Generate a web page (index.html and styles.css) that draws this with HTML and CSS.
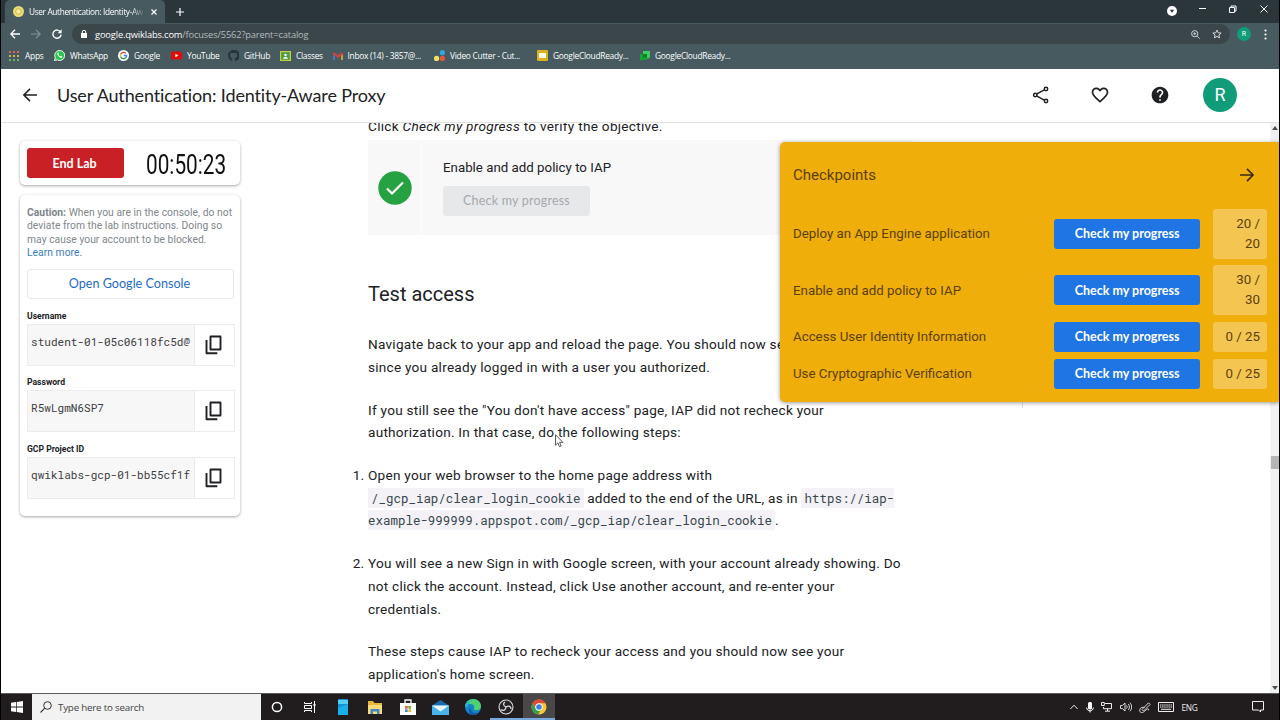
FILE: index.html
```
<!DOCTYPE html>
<html lang="en">
<head>
    <meta charset="UTF-8">
    <title>User Authentication: Identity-Aware Proxy</title>
    <link rel="stylesheet" href="styles.css">
</head>
<body>
    <div class="screen">
        <div class="tab-strip">
            <div class="tab">
                <svg class="favicon" width="11" height="11" viewBox="0 0 11 11"><circle cx="5.5" cy="5.5" r="5.5" fill="#e9dc7a"/><circle cx="5.5" cy="5.5" r="2.8" fill="#f6eda2" stroke="#c9b940"/></svg>
                <span class="tab-title">User Authentication: Identity-Aw</span>
                <svg class="tab-close" width="6" height="6" viewBox="0 0 6 6"><path d="M.5.5l5 5M5.5.5l-5 5" stroke="#fff" stroke-width="1.2"/></svg>
            </div>
            <svg class="new-tab" width="8" height="8" viewBox="0 0 8 8"><path d="M4 0v8M0 4h8" stroke="#fff" stroke-width="1.2"/></svg>
            <div class="window-buttons">
                <svg width="10" height="10" viewBox="0 0 10 10"><circle cx="5" cy="5" r="5" fill="#fff"/><path d="M2.8 3.8h4.4L5 6.7z" fill="#2b363a"/></svg>
                <svg width="7" height="10" viewBox="0 0 7 10"><path d="M0 3.5h7" stroke="#fff"/></svg>
                <svg width="8" height="10" viewBox="0 0 8 10"><path d="M.5 2.5h5v5h-5zM2 2.500V1h5v5H5.500" fill="none" stroke="#fff"/></svg>
                <svg width="8" height="10" viewBox="0 0 8 10"><path d="M.5.5l7 7M7.500.5l-7 7" stroke="#fff"/></svg>
            </div>
        </div>

        <div class="toolbar">
            <div class="nav-buttons">
                <svg width="10" height="10" viewBox="0 0 10 10"><path d="M10 5H1M5 .8L.8 5 5 9.200" fill="none" stroke="#fff" stroke-width="1.300"/></svg>
                <svg width="10" height="10" viewBox="0 0 10 10"><path d="M0 5h9M5 .8L9.200 5 5 9.200" fill="none" stroke="#84949a" stroke-width="1.200"/></svg>
                <svg width="10" height="10" viewBox="0 0 10 10"><path d="M8.500 3A4.100 4.100 0 1 0 9.100 5.600" fill="none" stroke="#fff" stroke-width="1.400"/><path d="M9.600.3v4H5.600z" fill="#fff"/></svg>
            </div>
            <div class="address">
                <svg width="6" height="8" viewBox="0 0 6 8"><path d="M0 3h6v5H0z" fill="#fff"/><path d="M1.300 3.500V2a1.700 1.700 0 0 1 3.400 0v1.500" fill="none" stroke="#fff"/></svg>
                <span class="url"><b>google.qwiklabs.com</b>/focuses/5562?parent=catalog</span>
                <svg class="zoom" width="9" height="9" viewBox="0 0 9 9"><circle cx="3.700" cy="3.700" r="3.100" fill="none" stroke="#cdd2d4"/><path d="M6 6l2.700 2.700M2.200 3.700h3M3.700 2.200v3" stroke="#cdd2d4" stroke-width=".9"/></svg>
                <svg width="10" height="10" viewBox="0 0 24 24"><path d="M12 2.500l2.900 6.600 7.100.6-5.400 4.700 1.600 7L12 17.700l-6.200 3.700 1.600-7L2 9.700l7.100-.6z" fill="none" stroke="#dde1e2" stroke-width="2.200"/></svg>
            </div>
            <span class="profile">R</span>
            <svg class="menu" width="3" height="11" viewBox="0 0 3 11"><g fill="#fff"><circle cx="1.500" cy="1.500" r="1.100"/><circle cx="1.500" cy="5.500" r="1.100"/><circle cx="1.500" cy="9.500" r="1.100"/></g></svg>
        </div>

        <div class="bookmarks">
            <span class="bookmark bm-apps"><svg width="10" height="10" viewBox="0 0 10 10"><g fill="#d96b5c"><path d="M0 0h2v2H0zM4 0h2v2H4zM8 0h2v2H8z"/></g><g fill="#d8b04f"><path d="M0 4h2v2H0zM4 4h2v2H4zM8 4h2v2H8z"/></g><g fill="#6fae6b"><path d="M0 8h2v2H0zM4 8h2v2H4zM8 8h2v2H8z"/></g></svg>Apps</span>
            <span class="bookmark bm-whatsapp"><svg width="11" height="11" viewBox="0 0 24 24"><path d="M1 23l1.700-6A11 11 0 1 1 7 21.500z" fill="#2cc64f" stroke="#fff" stroke-width="2"/><path d="M8 6c-3 3 3 11 8 11 2 0 3-3 1-3.600l-2-.8-1.400 1.400c-2-.8-3-2-3.700-3.600L11 9 9.600 6z" fill="#fff"/></svg>WhatsApp</span>
            <span class="bookmark bm-google"><svg width="11" height="11" viewBox="0 0 22 22"><circle cx="11" cy="11" r="11" fill="#fff"/><g fill="none" stroke-width="2.800"><path d="M15.500 6.500A6.300 6.300 0 0 0 5.400 8.200" stroke="#e04438"/><path d="M5.400 8.200a6.300 6.300 0 0 0 0 5.600" stroke="#f3b922"/><path d="M5.400 13.800a6.300 6.300 0 0 0 9.800 2" stroke="#35a455"/><path d="M15.200 15.800a6.300 6.300 0 0 0 2-4.800H11.500" stroke="#4483ef"/></g></svg>Google</span>
            <span class="bookmark bm-youtube"><svg width="11" height="11" viewBox="0 0 11 11"><rect y="1.500" width="11" height="8" rx="2" fill="#e00b0b"/><path d="M4.400 3.800v3.400l3-1.700z" fill="#fff"/></svg>YouTube</span>
            <span class="bookmark bm-github"><svg width="11" height="11" viewBox="0 0 16 16"><path fill="#27343a" d="M8 0C3.580 0 0 3.580 0 8c0 3.540 2.290 6.530 5.470 7.590.4.070.55-.17.55-.38v-1.490c-2.230.48-2.700-.94-2.700-.94-.9-1.900-1.400-1.200-.8-1.300.9 0 1.200.9 1.200.9.800 1.300 2 1 2.400.8.100-.6.300-.9.500-1.100-1.800-.2-3.600-.9-3.600-4 0-.9.300-1.600.8-2.100-.1-.2-.4-1 .1-2.100 0 0 .7-.2 2.200.8a7.400 7.400 0 0 1 4 0c1.500-1 2.200-.8 2.200-.8.400 1.100.100 1.900.1 2.100.5.500.8 1.200.8 2.100 0 3.100-1.900 3.800-3.700 4 .3.300.6.800.6 1.500v2.200c0 .2.100.5.500.4A8 8 0 0 0 8 0z"/></svg>GitHub</span>
            <span class="bookmark bm-classes"><svg width="11" height="10" viewBox="0 0 11 10"><path d="M0 0h11v10H0z" fill="#c9cf3a"/><path d="M1.200 1.200h8.600v7.600H1.200z" fill="#4d9a4c"/><circle cx="5.500" cy="4" r="1.300" fill="#fff"/><path d="M3 7.700c.4-2.300 4.600-2.300 5 0z" fill="#fff"/></svg>Classes</span>
            <span class="bookmark bm-inbox"><svg width="10" height="8" viewBox="0 0 10 8"><path d="M0 1h2v7H0z" fill="#4a78bd"/><path d="M8 1h2v7H8z" fill="#c5a23c"/><path d="M0 1l1.500-.8L5 3.200 8.500.2 10 1v1.500L5 6 0 2.500z" fill="#c7453f"/></svg>Inbox (14) - 3857@...</span>
            <span class="bookmark bm-cutter"><svg width="11" height="11" viewBox="0 0 11 11"><circle cx="8.400" cy="2.700" r="2.600" fill="#36a5dc"/><circle cx="2.600" cy="8.400" r="2.600" fill="#f0e463"/><circle cx="8.400" cy="8.400" r="2.600" fill="#e2573b"/></svg>Video Cutter - Cut...</span>
            <span class="bookmark bm-slides"><svg width="11" height="11" viewBox="0 0 11 11"><rect width="11" height="11" rx="1" fill="#dfb11f"/><path d="M2 3h7v5H2z" fill="#fffbe5"/></svg>GoogleCloudReady...</span>
            <span class="bookmark bm-chat"><svg width="10" height="10" viewBox="0 0 10 10"><path d="M3 0h7v6L8.500 7.500H3z" fill="#3fce5c"/><path d="M0 3h7v6H1.500L0 10z" fill="#16a336"/><path d="M3 3h4v3.500H3z" fill="#0b7f24"/></svg>GoogleCloudReady...</span>
        </div>

        <header class="page-header">
            <svg class="back" width="14" height="14" viewBox="0 0 14 14"><path d="M14 7H1.200M7 .9L.9 7 7 13.100" fill="none" stroke="#202124" stroke-width="1.500"/></svg>
            <h1>User Authentication: Identity-Aware Proxy</h1>
            <div class="header-actions">
                <svg width="18" height="18" viewBox="0 0 18 18"><g fill="none" stroke="#202124" stroke-width="1.500"><path d="M4.500 8.200l8.300-4.600M4.500 9.800l8.300 4.600"/><circle cx="3.300" cy="9" r="1.700"/><circle cx="14" cy="3" r="1.700"/><circle cx="14" cy="15" r="1.700"/></g></svg>
                <svg width="20" height="20" viewBox="0 0 24 24"><path fill="#202124" d="M16.500 3c-1.740 0-3.410.81-4.500 2.090C10.910 3.810 9.240 3 7.500 3 4.420 3 2 5.420 2 8.500c0 3.780 3.400 6.860 8.550 11.540L12 21.350l1.450-1.320C18.600 15.360 22 12.280 22 8.500 22 5.420 19.580 3 16.500 3zm-4.400 15.550l-.1.100-.1-.1C7.140 14.240 4 11.390 4 8.500 4 6.500 5.500 5 7.500 5c1.540 0 3.040.99 3.570 2.360h1.870C13.460 5.990 14.960 5 16.500 5c2 0 3.500 1.500 3.500 3.500 0 2.890-3.140 5.740-7.900 10.050z"/></svg>
                <svg width="20" height="20" viewBox="0 0 24 24"><path fill="#202124" d="M12 2C6.480 2 2 6.480 2 12s4.480 10 10 10 10-4.480 10-10S17.520 2 12 2zm1 17h-2v-2h2v2zm2.070-7.750l-.9.920C13.450 12.900 13 13.500 13 15h-2v-.5c0-1.100.45-2.100 1.170-2.830l1.240-1.260c.37-.36.59-.86.59-1.410 0-1.100-.9-2-2-2s-2 .9-2 2H8c0-2.210 1.790-4 4-4s4 1.790 4 4c0 .88-.36 1.680-.93 2.250z"/></svg>
                <span class="avatar">R</span>
            </div>
        </header>

        <div class="page">
            <aside class="sidebar">
                <div class="card timer-card">
                    <button class="end-lab">End Lab</button>
                    <span class="timer">00:50:23</span>
                </div>
                <div class="card account-card">
                    <p class="caution"><b>Caution:</b> When you are in the console, do not<br>deviate from the lab instructions. Doing so<br>may cause your account to be blocked.<br><a>Learn more.</a></p>
                    <button class="open-console">Open Google Console</button>
                    <label>Username</label>
                    <div class="field">
                        <code>student-01-05c06118fc5d@</code>
                        <svg width="18" height="20" viewBox="0 0 18 20"><path d="M5.500 1.500h10v13h-10zM1.500 5v13.200h10.800" fill="none" stroke="#202124" stroke-width="1.900" stroke-linejoin="round"/></svg>
                    </div>
                    <label>Password</label>
                    <div class="field">
                        <code>R5wLgmN6SP7</code>
                        <svg width="18" height="20" viewBox="0 0 18 20"><path d="M5.500 1.500h10v13h-10zM1.500 5v13.200h10.800" fill="none" stroke="#202124" stroke-width="1.900" stroke-linejoin="round"/></svg>
                    </div>
                    <label>GCP Project ID</label>
                    <div class="field">
                        <code>qwiklabs-gcp-01-bb55cf1f</code>
                        <svg width="18" height="20" viewBox="0 0 18 20"><path d="M5.500 1.500h10v13h-10zM1.500 5v13.200h10.800" fill="none" stroke="#202124" stroke-width="1.900" stroke-linejoin="round"/></svg>
                    </div>
                </div>
            </aside>

            <main class="lab">
                <p class="first">Click <em>Check my progress</em> to verify the objective.</p>
                <div class="activity">
                    <div class="activity-status">
                        <svg width="34" height="34" viewBox="0 0 34 34"><circle cx="17" cy="17" r="16.700" fill="#27a243"/><path d="M9 17.500l5 5L25 11.500" fill="none" stroke="#fff" stroke-width="2.200"/></svg>
                    </div>
                    <div class="activity-body">
                        <span>Enable and add policy to IAP</span>
                        <button class="check disabled">Check my progress</button>
                    </div>
                </div>
                <h2>Test access</h2>
                <p>Navigate back to your app and reload the page. You should now see the app<br>since you already logged in with a user you authorized.</p>
                <p>If you still see the "You don't have access" page, IAP did not recheck your<br>authorization. In that case, do the following steps:</p>
                <ol>
                    <li><p>Open your web browser to the home page address with<br><code>/_gcp_iap/clear_login_cookie</code> added to the end of the URL, as in <code>https://iap-<br>example-999999.appspot.com/_gcp_iap/clear_login_cookie</code>.</p></li>
                    <li>
                        <p>You will see a new Sign in with Google screen, with your account already showing. Do<br>not click the account. Instead, click Use another account, and re-enter your<br>credentials.</p>
                        <p>These steps cause IAP to recheck your access and you should now see your<br>application's home screen.</p>
                    </li>
                </ol>
            </main>

            <div class="outline-border"></div>
            <div class="scrollbar"><i class="up"></i><i class="thumb"></i><i class="down"></i></div>

            <section class="checkpoints">
                <div class="checkpoints-head">
                    <span>Checkpoints</span>
                    <svg width="14" height="14" viewBox="0 0 14 14"><path d="M0 7h12.800M7 .9L13.100 7 7 13.100" fill="none" stroke="#3a2a05" stroke-width="1.600"/></svg>
                </div>
                <div class="checkpoint"><span class="name">Deploy an App Engine application</span><button class="check">Check my progress</button><span class="score">20 /<br>20</span></div>
                <div class="checkpoint"><span class="name">Enable and add policy to IAP</span><button class="check">Check my progress</button><span class="score">30 /<br>30</span></div>
                <div class="checkpoint"><span class="name">Access User Identity Information</span><button class="check">Check my progress</button><span class="score">0 / 25</span></div>
                <div class="checkpoint"><span class="name">Use Cryptographic Verification</span><button class="check">Check my progress</button><span class="score">0 / 25</span></div>
            </section>

            <svg class="cursor" width="9" height="14" viewBox="0 0 9 14"><path d="M.5.7v10.500l2.400-2.300 1.600 3.800 1.700-.7-1.600-3.600h3.300z" fill="#fff" stroke="#333" stroke-width=".8"/></svg>
        </div>

        <footer class="taskbar">
            <div class="start"><svg width="12" height="12" viewBox="0 0 12 12"><path d="M0 1.700L5 1v4.600H0zM5.700.9L12 0v5.600H5.700zM0 6.400h5V11l-5-.7zM5.700 6.400H12V12l-6.300-.9z" fill="#fff"/></svg></div>
            <div class="search"><svg width="12" height="12" viewBox="0 0 12 12"><circle cx="7.500" cy="4.500" r="3.800" fill="none" stroke="#333"/><path d="M4.800 7.200L.5 11.500" stroke="#333" stroke-width="1.100"/></svg>Type here to search</div>
            <div class="apps">
                <span><svg width="12" height="12" viewBox="0 0 12 12"><circle cx="6" cy="6" r="4.600" fill="none" stroke="#fff" stroke-width="1.500"/></svg></span>
                <span><svg width="12" height="12" viewBox="0 0 12 12"><path d="M.5 1v1.500h7V1M.5 11V9.500h7V11M.5 4.500h7v3h-7zM10.500 0v12" fill="none" stroke="#fff"/><path d="M9.500 3h2v2h-2z" fill="#fff"/></svg></span>
                <span><svg width="10" height="16" viewBox="0 0 10 16"><rect width="10" height="16" rx="1" fill="#1690d6"/><path d="M0 5h10V1H0z" fill="#53cff2"/><path d="M0 16V9l10-4v11z" fill="#18b0e8"/></svg></span>
                <span><svg width="14" height="13" viewBox="0 0 14 13"><path d="M0 0h5l1.500 2H14v11H0z" fill="#e9b53d"/><path d="M0 4h14v9H0z" fill="#fbdb76"/><path d="M2.500 13V8h9v5H9v-2.500H5V13z" fill="#4487c4"/></svg></span>
                <span><svg width="16" height="16" viewBox="0 0 16 16"><path d="M0 4h16v12H0z" fill="#fff"/><path d="M5 5V1h6v4" fill="none" stroke="#fff" stroke-width="1.300"/><path d="M5 7h2.700v2.700H5z" fill="#e8583a"/><path d="M8.300 7H11v2.700H8.300z" fill="#76ad35"/><path d="M5 10.300h2.700V13H5z" fill="#3392d5"/><path d="M8.300 10.300H11V13H8.300z" fill="#edb528"/></svg></span>
                <span><svg width="17" height="15" viewBox="0 0 17 15"><path d="M0 5.500L8.500 0 17 5.500V15H0z" fill="#176bae"/><path d="M0 5.500h17V15H0z" fill="#47b5ec"/><path d="M0 5.500l8.500 6 8.500-6z" fill="#e8f5fc"/></svg></span>
                <span><svg width="16" height="16" viewBox="0 0 16 16"><circle cx="8" cy="8" r="8" fill="#1684c9"/><path d="M0 7.500C.5 3 4 0 8 0c4.500 0 8 3.300 8 7 0 3-2.300 4.200-4.500 4.200S8.500 10.500 9 9.500 9.500 5 5.500 5 .5 6.500 0 7.500z" fill="#4ed26f"/><path d="M0 7.500C1 3.500 4 1 8 1.500c-3 .5-5.500 3-5.500 7z" fill="#29b4dd"/><path d="M5.500 8.500c-.5 4 3.500 6.500 8.300 5A8 8 0 0 1 5 15.400C3.500 12 3.800 9.500 5.500 8.500z" fill="#1059a6"/></svg></span>
                <span class="running"><svg width="16" height="16" viewBox="0 0 16 16"><circle cx="8" cy="8" r="7" fill="#252326" stroke="#ddd" stroke-width="1.100"/><path d="M8 8c-3-1-3-4-1-5M8 8c3-2 5-.5 5 2M8 8c0 3-3 4.500-5 2.500" fill="none" stroke="#ddd" stroke-width="1.300"/></svg></span>
                <span class="running current"><svg width="16" height="16" viewBox="0 0 16 16"><circle cx="8" cy="8" r="7.500" fill="#f7c92c"/><path d="M1.500 4.200a7.500 7.500 0 0 1 13 0H8A3.700 3.700 0 0 0 4.700 9.500z" fill="#e1473b"/><path d="M1.500 4.200L4.800 9.900A3.700 3.700 0 0 0 9.500 11.400l-2.400 4A7.500 7.500 0 0 1 1.500 4.200z" fill="#2fa24f"/><circle cx="8" cy="8" r="3.700" fill="#fff"/><circle cx="8" cy="8" r="2.800" fill="#3f80e8"/></svg></span>
            </div>
            <div class="tray">
                <svg width="8" height="6" viewBox="0 0 8 6"><path d="M.4 5L4 1.200 7.600 5" fill="none" stroke="#eee"/></svg>
                <svg width="8" height="11" viewBox="0 0 8 11"><rect x="2" width="4" height="7.500" rx="1.500" fill="#fff"/><path d="M.7 5.500C.7 10 7.300 10 7.300 5.500M4 8.500v2" fill="none" stroke="#fff"/></svg>
                <svg width="11" height="10" viewBox="0 0 11 10"><path d="M4 1.500h6.500v5.200H2.500V5M6.500 7v2M4 9.200h5M.5.5h2.800v3H.5z" fill="none" stroke="#eee"/></svg>
                <svg width="12" height="10" viewBox="0 0 12 10"><path d="M.5 3.500h1.800L5 1v8L2.300 6.500H.5zM6.500 3.500c.8 1 .8 2 0 3M8.300 2c1.500 2 1.500 4 0 6M10 .7c2.200 2.800 2.200 5.800 0 8.600" fill="none" stroke="#eee" stroke-width=".9"/></svg>
                <svg width="12" height="11" viewBox="0 0 12 11"><path d="M3 7.500L9.500.8l1.600 1.600L4.500 9zM5.500 5.500C2 4.500 0 7 1 9.500s4 .5 6-1.500 3-1 2.500.3" fill="none" stroke="#eee" stroke-width=".9"/></svg>
                <svg width="16" height="10" viewBox="0 0 16 10"><path d="M.5.5h15v9H.5z" fill="none" stroke="#eee"/><path d="M2 3h12M2 5h12" stroke="#eee" stroke-dasharray="1.500 .6"/><path d="M3 7.300h10" stroke="#eee"/></svg>
                <span class="lang">ENG</span>
                <svg width="12" height="12" viewBox="0 0 12 12"><path d="M.5.5h11V9H8.500v2L6.500 9h-6z" fill="none" stroke="#eee"/></svg>
            </div>
        </footer>
    </div>
</body>
</html>
```
FILE: styles.css
```
* {
    box-sizing: border-box;
}
body {
    margin: 0;
    background: #000;
    font-family: Roboto, sans-serif;
    color: #202124;
}
svg {
    display: block;
    flex: none;
}
button {
    font-family: Lato, sans-serif;
    padding: 0;
    border: none;
    border-radius: 3px;
}
.screen {
    width: 1278px;
    height: 720px;
    margin: 0 auto;
    display: flex;
    flex-direction: column;
    overflow: hidden;
}

/* browser */
.tab-strip {
    height: 23px;
    flex: none;
    display: flex;
    align-items: center;
    background: #2b363a;
    font-family: "Open Sans", sans-serif;
}
.tab {
    width: 160px;
    height: 23px;
    margin-left: 4px;
    padding: 0 8px;
    display: flex;
    align-items: center;
    background: #465a60;
    border-radius: 5px 5px 0 0;
}
.tab-title {
    width: 116px;
    margin: 0 6px 0 5px;
    white-space: nowrap;
    font-size: 8.3px;
    letter-spacing: -0.35px;
    color: #fff;
    -webkit-mask-image: linear-gradient(90deg, #000 88%, transparent);
}
.new-tab {
    margin-left: 11px;
}
.window-buttons {
    display: flex;
    gap: 23px;
    margin-left: auto;
    margin-right: 11px;
    margin-top: -2px;
}
.window-buttons svg:first-child {
    margin-top: 1px;
    margin-right: -1px;
}
.toolbar {
    height: 22px;
    flex: none;
    display: flex;
    align-items: center;
    background: #465a60;
}
.nav-buttons {
    display: flex;
    gap: 11px;
    padding-left: 9px;
    width: 71px;
}
.address {
    width: 1158px;
    height: 20px;
    padding: 0 8px 0 9px;
    display: flex;
    align-items: center;
    border-radius: 10px;
    background: #3a4649;
    font-family: "Open Sans", sans-serif;
}
.url {
    margin-left: 8px;
    font-size: 9.3px;
    letter-spacing: -0.15px;
    color: #b4bcbf;
}
.url b {
    font-weight: 400;
    color: #fff;
}
.zoom {
    margin: 0 12px 0 auto;
}
.profile {
    width: 14px;
    height: 14px;
    margin-left: 7px;
    border-radius: 50%;
    background: #109c78;
    color: #fff;
    font-size: 7px;
    line-height: 14px;
    text-align: center;
}
.menu {
    margin-left: 13px;
}
.bookmarks {
    height: 24px;
    flex: none;
    display: flex;
    align-items: center;
    background: #465a60;
    padding: 0 0 3px 8px;
    font-family: "Open Sans", sans-serif;
    font-size: 8.4px;
    letter-spacing: -0.27px;
    color: #fff;
}
.bookmark {
    display: flex;
    align-items: center;
    gap: 5px;
    white-space: nowrap;
}
.bm-apps { width: 45px; gap: 6px; }
.bm-whatsapp { width: 64px; }
.bm-google { width: 53px; }
.bm-youtube { width: 57px; }
.bm-github { width: 52px; }
.bm-classes { width: 52.5px; }
.bm-inbox { width: 101.5px; }
.bm-cutter { width: 103px; }
.bm-slides { width: 103px; }

/* lab header */
.page-header {
    height: 54px;
    flex: none;
    display: flex;
    align-items: center;
    padding: 0 42px 1px 22px;
    background: #fff;
    border-bottom: 1px solid #e0e0e0;
}
h1 {
    margin: -1px 0 0 20px;
    font-family: Lato, sans-serif;
    font-size: 18px;
    font-weight: 400;
    letter-spacing: -0.13px;
}
.header-actions {
    margin-left: auto;
    display: flex;
    align-items: center;
    gap: 40px;
}
.avatar {
    width: 34px;
    height: 34px;
    margin-left: -7px;
    border-radius: 50%;
    background: #109c78;
    color: #fff;
    font-size: 18px;
    line-height: 34px;
    text-align: center;
}

/* lab page */
.page {
    height: 570px;
    flex: none;
    position: relative;
    display: flex;
    background: #fff;
    overflow: hidden;
}
.sidebar {
    width: 220px;
    margin: 18px 0 0 19px;
}
.card {
    background: #fff;
    border-radius: 5px;
    box-shadow: 0 1px 3px rgba(0,0,0,0.35);
}
.timer-card {
    height: 44px;
    display: flex;
    align-items: center;
    padding: 0 7px;
}
.end-lab {
    width: 97px;
    height: 30px;
    padding-right: 2px;
    background: #c92026;
    color: #fff;
    font-size: 12.5px;
    font-weight: 700;
}
.timer {
    width: 80px;
    margin-top: 3px;
    margin-left: 22px;
    font-size: 27px;
    white-space: nowrap;
    transform: scaleX(0.77);
    transform-origin: left;
    color: #111;
}
.account-card {
    height: 321px;
    margin-top: 10px;
    padding: 11px 7px 0;
}
.caution {
    margin: 0 0 9px;
    font-size: 10.3px;
    line-height: 13.4px;
    letter-spacing: 0.04px;
    white-space: nowrap;
    color: #80868b;
}
.caution a {
    color: #3b7dc0;
}
.open-console {
    width: 207px;
    height: 30px;
    margin-bottom: 11px;
    padding-right: 2px;
    background: #fff;
    border: 1px solid #e8eaed;
    color: #1f6bc0;
    font-size: 12.6px;
}
label {
    display: block;
    height: 14px;
    line-height: 12px;
    font-size: 8.6px;
    font-weight: 700;
}
.field {
    width: 208px;
    height: 42px;
    margin-bottom: 10.5px;
    display: flex;
    align-items: center;
    border: 1px solid #ececec;
}
.field code {
    width: 167px;
    height: 40px;
    padding-left: 3px;
    background: #f7f7f7;
    border-right: 1px solid #ececec;
    font-family: "Roboto Mono", "Liberation Mono", monospace;
    font-size: 11.05px;
    line-height: 34px;
    color: #3c4043;
}
.field svg {
    margin-left: 10px;
}

.lab {
    width: 545px;
    margin: -8px 0 0 128px;
    font-size: 13.6px;
    line-height: 22.7px;
    letter-spacing: 0.25px;
    white-space: nowrap;
}
.lab p {
    margin: 0 0 20px;
}
.lab .first {
    margin-bottom: 2.5px;
    letter-spacing: 0.29px;
}
.activity {
    height: 95px;
    display: flex;
    background: #f8f8f8;
    font-size: 13.3px;
    letter-spacing: 0;
}
.activity-status {
    width: 54px;
    display: flex;
    align-items: center;
    justify-content: center;
    border-right: 1px solid #fdfdfd;
}
.activity-body {
    padding: 17px 0 0 21px;
}
.check {
    display: block;
    width: 146px;
    height: 30px;
    background: #1f75e3;
    color: #fff;
    font-size: 12.5px;
    font-weight: 700;
}
.check.disabled {
    width: 147px;
    margin-top: 6px;
    background: #e6e8ea;
    color: #a5a9ad;
    font-weight: 400;
    letter-spacing: 0.2px;
}
h2 {
    margin: 46px 0 26px;
    font-size: 20px;
    font-weight: 400;
    line-height: 26px;
    letter-spacing: 0;
}
ol {
    margin: 0;
    padding: 0;
}
.lab code {
    padding: 2px 3px;
    background: #f4f2f6;
    font-family: "Roboto Mono", "Liberation Mono", monospace;
    font-size: 12.47px;
    letter-spacing: 0;
    color: #37474f;
}
.outline-border {
    width: 1px;
    height: 15px;
    margin: 270px 0 0 109px;
    background: #e0e0e0;
}
.scrollbar {
    width: 9px;
    margin-left: auto;
    display: flex;
    flex-direction: column;
    align-items: center;
    justify-content: space-between;
    background: #f1f1f1;
}
.scrollbar .up, .scrollbar .down {
    border: 3px solid transparent;
}
.scrollbar .up {
    border-top: 0;
    border-bottom: 4px solid #505050;
    margin-top: 3px;
}
.scrollbar .down {
    border-bottom: 0;
    border-top: 4px solid #505050;
    margin-bottom: 3px;
}
.scrollbar .thumb {
    width: 8px;
    height: 13px;
    margin-top: 108px;
    background: #b5b5b5;
}

/* floating progress panel */
.checkpoints {
    position: absolute;
    top: 19px;
    right: 0;
    width: 499px;
    height: 260px;
    padding: 0 12px 0 13px;
    background: #efae09;
    border-radius: 5px 0 0 5px;
    box-shadow: 0 1px 4px rgba(0,0,0,0.4);
    color: #5a4108;
    font-size: 13.3px;
}
.checkpoints-head {
    height: 66.5px;
    padding-right: 13px;
    display: flex;
    align-items: center;
    justify-content: space-between;
    font-size: 15px;
}
.checkpoint {
    display: flex;
    align-items: center;
    margin-bottom: 6.7px;
}
.checkpoint .name {
    width: 261.5px;
}
.score {
    width: 54px;
    margin-left: 13px;
    padding: 5px 7px;
    background: #f4c550;
    border-radius: 3px;
    line-height: 20px;
    text-align: right;
}
.cursor {
    position: absolute;
    left: 554px;
    top: 311px;
}

/* taskbar */
.taskbar {
    height: 27px;
    flex: none;
    display: flex;
    background: #211d1f;
    border-top: 1px solid #5b5b5b;
}
.start {
    width: 31px;
    display: flex;
    align-items: center;
    justify-content: center;
}
.search {
    width: 229px;
    display: flex;
    align-items: center;
    gap: 6px;
    padding-left: 8px;
    background: #f2f2f2;
    color: #444;
    font-family: "Open Sans", sans-serif;
    font-size: 9.8px;
    letter-spacing: -0.22px;
}
.apps {
    display: flex;
}
.apps span {
    width: 32.7px;
    display: flex;
    align-items: center;
    justify-content: center;
}
.apps .running {
    box-shadow: inset 0 -2px #76a9dc;
}
.apps .current {
    background: #4a4748;
}
.tray {
    margin-left: auto;
    display: flex;
    align-items: center;
    color: #eee;
    font-family: "Open Sans", sans-serif;
    font-size: 8.3px;
    letter-spacing: -0.2px;
    padding-right: 15px;
    gap: 7.3px;
}
.tray svg:first-child {
    margin-right: 1px;
}
.lang {
    margin-right: 48px;
}
.tray .lang {
    margin-right: 47px;
}
```
